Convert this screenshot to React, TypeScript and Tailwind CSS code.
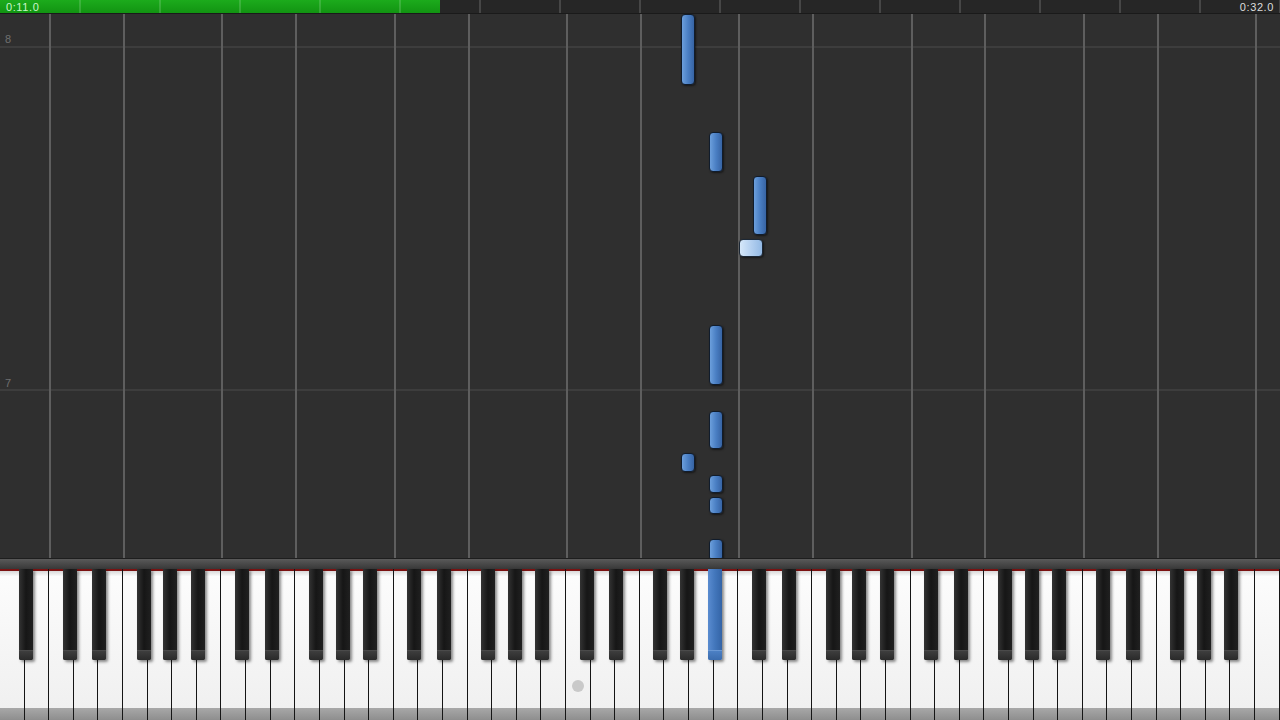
import React from 'react'

const W = 1280 / 52
const NAMES = ['A', 'B', 'C', 'D', 'E', 'F', 'G']

// black key placement relative to the right edge of the white key below it
const blackPos: Record<string, string> = {
  C: '-right-[4px]',
  D: '-right-[9px]',
  F: '-right-[4px]',
  G: '-right-[6px]',
  A: '-right-[9px]',
}
const blackOff: Record<string, number> = { C: -3, D: 2, F: -3, G: -1, A: 2 }

const whiteKeys = Array.from({ length: 52 }, (_, i) => ({
  i,
  name: NAMES[i % 7],
  sharp: i < 51 && ['A', 'C', 'D', 'F', 'G'].includes(NAMES[i % 7]),
}))

// white index + sharp flag, top/height inside the roll
const notes = [
  { key: 27, sharp: true, top: 0, h: 71 },
  { key: 28, sharp: true, top: 118, h: 40 },
  { key: 30, sharp: true, top: 162, h: 59 },
  { key: 30, sharp: false, top: 225, h: 18 },
  { key: 28, sharp: true, top: 311, h: 60 },
  { key: 28, sharp: true, top: 397, h: 38 },
  { key: 27, sharp: true, top: 439, h: 19 },
  { key: 28, sharp: true, top: 461, h: 18 },
  { key: 28, sharp: true, top: 483, h: 17 },
  { key: 28, sharp: true, top: 525, h: 22 },
]

const pressedSharp = 28

const TopBar = ({ current, total }: { current: number; total: number }) => (
  <div className="relative h-[14px] w-full overflow-hidden border-b border-[#1a1a1a] bg-[#262626] font-['Liberation_Sans',sans-serif] text-[11px] leading-[14px]">
    <div
      className="absolute inset-y-0 left-0 bg-linear-to-b from-[#1cab1c] to-[#129412]"
      style={{ width: `${(current / total) * 100}%` }}
    />
    <div className="absolute inset-0 flex pl-[1px]">
      {Array.from({ length: 16 }, (_, i) => (
        <div key={i} className="h-full w-20 shrink-0 border-r-2 border-white/15" />
      ))}
    </div>
    <div className="relative flex h-full items-center justify-between px-[6px]">
      <span className="tracking-[0.6px] text-[#c9f5c9]">0:11.0</span>
      <span className="tracking-[0.6px] text-[#dcdcdc]">0:32.0</span>
    </div>
  </div>
)

const Note = ({ k, sharp, top, h }: { k: number; sharp: boolean; top: number; h: number }) => {
  const name = NAMES[k % 7]
  const left = sharp ? (k + 1) * W + blackOff[name] - 7 : k * W + 1
  const width = sharp ? 14 : W - 1
  return (
    <div
      className={
        sharp
          ? 'absolute rounded-[4px] border border-[#101c2c] bg-linear-to-r from-[#6c9fdc] via-[#4a7fc4] to-[#3764a4] shadow-[1px_1px_2px_rgba(0,0,0,0.5)]'
          : 'absolute rounded-[4px] border border-[#1c2836] bg-linear-to-r from-[#d6e8fa] via-[#b4d0f0] to-[#93b9e4] shadow-[1px_1px_2px_rgba(0,0,0,0.5)]'
      }
      style={{ left, top, width, height: h }}
    />
  )
}

const Roll = () => (
  <div className="relative h-[544px] w-full overflow-hidden bg-[#2f2f2f]">
    <div className="absolute inset-x-0 top-[32px] h-[2px] bg-[#3d3d3d]" />
    <div className="absolute inset-x-0 top-[375px] h-[2px] bg-[#3d3d3d]" />
    <span className="absolute left-[5px] top-[17px] font-['Liberation_Sans',sans-serif] text-[11px] text-[#707070]">8</span>
    <span className="absolute left-[5px] top-[361px] font-['Liberation_Sans',sans-serif] text-[11px] text-[#707070]">7</span>
    <div className="relative flex h-full">
      {whiteKeys.map((k) => (
        <div
          key={k.i}
          className={
            k.i > 0 && (k.name === 'C' || k.name === 'F')
              ? 'h-full w-[calc(100%/52)] shrink-0 border-l-2 border-[#5e5e5e]'
              : 'h-full w-[calc(100%/52)] shrink-0'
          }
        />
      ))}
    </div>
    {notes.map((n, idx) => (
      <Note key={idx} k={n.key} sharp={n.sharp} top={n.top} h={n.h} />
    ))}
  </div>
)

const BlackKey = ({ name, pressed }: { name: string; pressed: boolean }) => (
  <div
    className={`absolute top-0 z-10 flex h-[91px] w-[14px] flex-col justify-end rounded-b-[2px] shadow-[2px_2px_3px_rgba(0,0,0,0.45)] ${blackPos[name]} ${
      pressed
        ? 'bg-linear-to-r from-[#5a8cd0] via-[#4276bb] to-[#3464a6]'
        : 'bg-linear-to-r from-[#333333] via-[#161616] to-[#202020]'
    }`}
  >
    <div
      className={
        pressed
          ? 'h-[10px] w-full rounded-b-[2px] border-t border-[#6a98d4] bg-linear-to-b from-[#4c80c4] to-[#3b6cae]'
          : 'h-[10px] w-full rounded-b-[2px] border-t border-[#4a4a4a] bg-linear-to-b from-[#3e3e3e] to-[#2a2a2a]'
      }
    />
  </div>
)

const Keyboard = () => (
  <div className="flex h-[151px] w-full">
    {whiteKeys.map((k) => (
      <div
        key={k.i}
        className="relative flex h-full w-[calc(100%/52)] shrink-0 flex-col border-r border-[#151515]"
      >
        <div className="flex flex-1 flex-col items-center justify-end border-t-2 border-[#7a1212] bg-linear-to-b from-[#d9d9d9] via-[#fcfcfc] via-[4%] to-[#f0f0f0] pb-[16px]">
          {k.i === 23 && <div className="h-[12px] w-[12px] rounded-full bg-[#c9c9c9]" />}
        </div>
        <div className="h-[12px] w-full bg-linear-to-b from-[#a8a8a8] to-[#8e8e8e]" />
        {k.sharp && <BlackKey name={k.name} pressed={k.i === pressedSharp} />}
      </div>
    ))}
  </div>
)

export default function App() {
  return (
    <div className="flex h-[720px] w-[1280px] flex-col overflow-hidden bg-[#2f2f2f]">
      <TopBar current={11} total={32} />
      <Roll />
      <div className="h-[11px] w-full border-t border-[#1e1e1e] bg-linear-to-b from-[#5a5a5a] to-[#383838]" />
      <Keyboard />
    </div>
  )
}
